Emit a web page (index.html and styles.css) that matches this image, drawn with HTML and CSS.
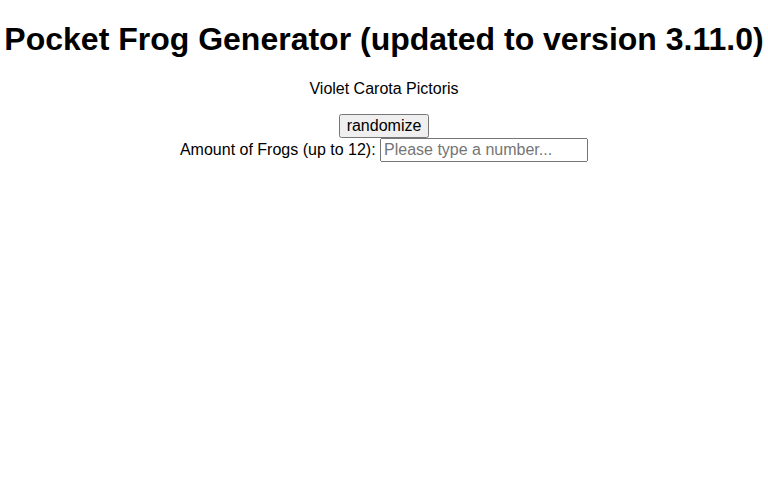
FILE: index.html
```html
<!DOCTYPE html>
<html lang="en">
<head>
  <meta charset="UTF-8" />
  <title>Pocket Frog Generator</title>
  <link rel="stylesheet" href="styles.css">
</head>
<body>
  <h1>Pocket Frog Generator (updated to version 3.11.0)</h1>
  <p id="frog-name">Violet Carota Pictoris</p>
  <button id="randomize">randomize</button><br>
  <label for="frog-count">Amount of Frogs (up to 12):</label>
  <input type="number" id="frog-count" placeholder="Please type a number..." />
</body>
</html>
```

FILE: styles.css
```css
body {
  font-family: "Liberation Sans", Arial, sans-serif;
  margin: 0;
  text-align: center;
  color: #000;
  background: #fff;
}

button,
input {
  font-family: inherit;
  font-size: 16px;
}

input {
  width: 200px;
  padding: 1px 2px;
  box-sizing: border-box;
  width: 208px;
}
```
